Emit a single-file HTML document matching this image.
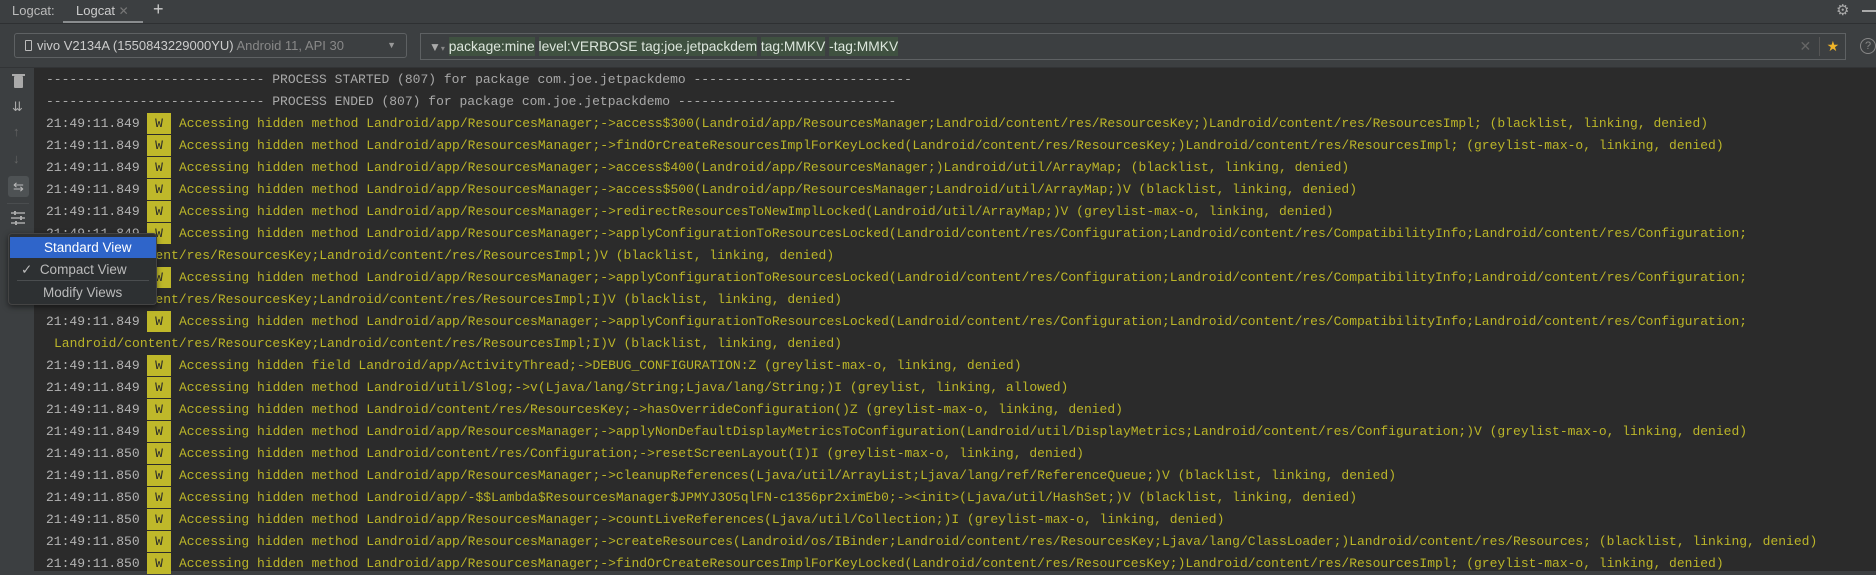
<!DOCTYPE html>
<html><head><meta charset="utf-8"><style>
*{margin:0;padding:0;box-sizing:border-box}
body{width:1876px;height:571px;overflow:hidden;background:#3c3f41;position:relative;font-family:"Liberation Sans",sans-serif;color:#bbb}
.a{position:absolute}
.log{position:absolute;left:34px;top:68px;right:0;bottom:0;background:#2b2b2b}
.r{position:absolute;left:0;height:22px;white-space:pre;font-family:"Liberation Mono",monospace;font-size:13px;line-height:22px}
.t{position:absolute;left:12px;color:#b4b4b4}
.w{position:absolute;left:113px;width:24px;height:21px;background:#bfb82a;color:#2b2b2b;text-align:center}
.m{position:absolute;left:145px;color:#bbb529}
.c{position:absolute;left:20px;color:#bbb529}
.p{position:absolute;left:12px;color:#a9a9a9}
.chip{background:#3f5140;color:#dde6dd;padding:2px 0}
</style></head><body>
<div class="a" style="left:12px;top:3px;font-size:13px;color:#bbb">Logcat:</div>
<div class="a" style="left:76px;top:3px;font-size:13px;color:#ccc">Logcat <span style="color:#777;font-size:12px">✕</span></div>
<div class="a" style="left:63px;top:21px;width:80px;height:3px;background:#8a8d8f"></div>
<div class="a" style="left:153px;top:-1px;font-size:18px;color:#ccc">+</div>
<div class="a" style="left:0;top:23px;width:1876px;height:1px;background:#2e3032"></div>
<div class="a" style="left:1836px;top:1px;font-size:15px;color:#aaa">⚙</div>
<div class="a" style="left:1862px;top:10px;width:14px;height:1.5px;background:#aaa"></div>
<div class="a" style="left:14px;top:33px;width:393px;height:25px;border:1px solid #5e6163;border-radius:3px;background:#3c3f41;font-size:13px;line-height:23px;padding-left:10px">
<span style="display:inline-block;width:7px;height:11px;border:1.5px solid #bbb;border-radius:1px;vertical-align:-1px;margin-right:5px"></span><span style="color:#ccc">vivo V2134A (1550843229000YU)</span> <span style="color:#888">Android 11, API 30</span><span style="position:absolute;right:10px;color:#999;font-size:9px">▼</span></div>
<div class="a" style="left:420px;top:33px;width:1426px;height:27px;border:1px solid #5e6163;background:#3c3f41;font-size:13.8px;line-height:25px;padding-left:8px">
<span style="color:#aaa;font-size:12px">▼</span><span style="color:#888;font-size:8px">▾</span> <span class="chip">package:mine</span> <span class="chip">level:VERBOSE </span> <span class="chip">tag:joe.jetpackdem</span> <span class="chip">tag:MMKV</span> <span class="chip">-tag:MMKV</span>
<span style="position:absolute;right:34px;color:#666">✕</span><span style="position:absolute;right:25px;top:3px;width:1px;height:19px;background:#555"></span><span style="position:absolute;right:6px;color:#f0b429">★</span></div>
<div class="a" style="left:1860px;top:38px;width:16px;height:16px;border:1px solid #888;border-radius:50%;font-size:11px;color:#888;line-height:14px;padding-left:4px">?</div>
<div class="a" style="left:0;top:67px;width:1876px;height:1px;background:#323436"></div>
<div class="a" style="left:14px;top:76px;width:9px;height:12px;background:#aaa;border-radius:1px"></div>
<div class="a" style="left:12px;top:74px;width:13px;height:2px;background:#aaa"></div>
<div class="a" style="left:12px;top:99px;font-size:13px;color:#aaa">⇊</div>
<div class="a" style="left:13px;top:124px;font-size:13px;color:#666">↑</div>
<div class="a" style="left:13px;top:151px;font-size:13px;color:#666">↓</div>
<div class="a" style="left:8px;top:176px;width:21px;height:21px;background:#4e5254;border-radius:3px;color:#bbb;font-size:13px;text-align:center;line-height:21px">⇆</div>
<div class="a" style="left:7px;top:203px;width:22px;height:1px;background:#4a4d4f"></div>
<svg class="a" style="left:10px;top:210px" width="16" height="16" viewBox="0 0 16 16" fill="none" stroke="#aaa" stroke-width="1.5"><path d="M1 3h14M1 8h14M1 13h14"/><path d="M5 1v4M11 6v4M6 11v4" stroke-width="2"/></svg>
<div class="log">
<div class="r" style="top:1px"><span class="p">---------------------------- PROCESS STARTED (807) for package com.joe.jetpackdemo ----------------------------</span></div>
<div class="r" style="top:23px"><span class="p">---------------------------- PROCESS ENDED (807) for package com.joe.jetpackdemo ----------------------------</span></div>
<div class="r" style="top:45px"><span class="t">21:49:11.849</span><span class="w">W</span><span class="m">Accessing hidden method Landroid/app/ResourcesManager;-&gt;access$300(Landroid/app/ResourcesManager;Landroid/content/res/ResourcesKey;)Landroid/content/res/ResourcesImpl; (blacklist, linking, denied)</span></div>
<div class="r" style="top:67px"><span class="t">21:49:11.849</span><span class="w">W</span><span class="m">Accessing hidden method Landroid/app/ResourcesManager;-&gt;findOrCreateResourcesImplForKeyLocked(Landroid/content/res/ResourcesKey;)Landroid/content/res/ResourcesImpl; (greylist-max-o, linking, denied)</span></div>
<div class="r" style="top:89px"><span class="t">21:49:11.849</span><span class="w">W</span><span class="m">Accessing hidden method Landroid/app/ResourcesManager;-&gt;access$400(Landroid/app/ResourcesManager;)Landroid/util/ArrayMap; (blacklist, linking, denied)</span></div>
<div class="r" style="top:111px"><span class="t">21:49:11.849</span><span class="w">W</span><span class="m">Accessing hidden method Landroid/app/ResourcesManager;-&gt;access$500(Landroid/app/ResourcesManager;Landroid/util/ArrayMap;)V (blacklist, linking, denied)</span></div>
<div class="r" style="top:133px"><span class="t">21:49:11.849</span><span class="w">W</span><span class="m">Accessing hidden method Landroid/app/ResourcesManager;-&gt;redirectResourcesToNewImplLocked(Landroid/util/ArrayMap;)V (greylist-max-o, linking, denied)</span></div>
<div class="r" style="top:155px"><span class="t">21:49:11.849</span><span class="w">W</span><span class="m">Accessing hidden method Landroid/app/ResourcesManager;-&gt;applyConfigurationToResourcesLocked(Landroid/content/res/Configuration;Landroid/content/res/CompatibilityInfo;Landroid/content/res/Configuration;</span></div>
<div class="r" style="top:177px"><span class="c">Landroid/content/res/ResourcesKey;Landroid/content/res/ResourcesImpl;)V (blacklist, linking, denied)</span></div>
<div class="r" style="top:199px"><span class="t">21:49:11.849</span><span class="w">W</span><span class="m">Accessing hidden method Landroid/app/ResourcesManager;-&gt;applyConfigurationToResourcesLocked(Landroid/content/res/Configuration;Landroid/content/res/CompatibilityInfo;Landroid/content/res/Configuration;</span></div>
<div class="r" style="top:221px"><span class="c">Landroid/content/res/ResourcesKey;Landroid/content/res/ResourcesImpl;I)V (blacklist, linking, denied)</span></div>
<div class="r" style="top:243px"><span class="t">21:49:11.849</span><span class="w">W</span><span class="m">Accessing hidden method Landroid/app/ResourcesManager;-&gt;applyConfigurationToResourcesLocked(Landroid/content/res/Configuration;Landroid/content/res/CompatibilityInfo;Landroid/content/res/Configuration;</span></div>
<div class="r" style="top:265px"><span class="c">Landroid/content/res/ResourcesKey;Landroid/content/res/ResourcesImpl;I)V (blacklist, linking, denied)</span></div>
<div class="r" style="top:287px"><span class="t">21:49:11.849</span><span class="w">W</span><span class="m">Accessing hidden field Landroid/app/ActivityThread;-&gt;DEBUG_CONFIGURATION:Z (greylist-max-o, linking, denied)</span></div>
<div class="r" style="top:309px"><span class="t">21:49:11.849</span><span class="w">W</span><span class="m">Accessing hidden method Landroid/util/Slog;-&gt;v(Ljava/lang/String;Ljava/lang/String;)I (greylist, linking, allowed)</span></div>
<div class="r" style="top:331px"><span class="t">21:49:11.849</span><span class="w">W</span><span class="m">Accessing hidden method Landroid/content/res/ResourcesKey;-&gt;hasOverrideConfiguration()Z (greylist-max-o, linking, denied)</span></div>
<div class="r" style="top:353px"><span class="t">21:49:11.849</span><span class="w">W</span><span class="m">Accessing hidden method Landroid/app/ResourcesManager;-&gt;applyNonDefaultDisplayMetricsToConfiguration(Landroid/util/DisplayMetrics;Landroid/content/res/Configuration;)V (greylist-max-o, linking, denied)</span></div>
<div class="r" style="top:375px"><span class="t">21:49:11.850</span><span class="w">W</span><span class="m">Accessing hidden method Landroid/content/res/Configuration;-&gt;resetScreenLayout(I)I (greylist-max-o, linking, denied)</span></div>
<div class="r" style="top:397px"><span class="t">21:49:11.850</span><span class="w">W</span><span class="m">Accessing hidden method Landroid/app/ResourcesManager;-&gt;cleanupReferences(Ljava/util/ArrayList;Ljava/lang/ref/ReferenceQueue;)V (blacklist, linking, denied)</span></div>
<div class="r" style="top:419px"><span class="t">21:49:11.850</span><span class="w">W</span><span class="m">Accessing hidden method Landroid/app/-$$Lambda$ResourcesManager$JPMYJ3O5qlFN-c1356pr2ximEb0;-&gt;&lt;init&gt;(Ljava/util/HashSet;)V (blacklist, linking, denied)</span></div>
<div class="r" style="top:441px"><span class="t">21:49:11.850</span><span class="w">W</span><span class="m">Accessing hidden method Landroid/app/ResourcesManager;-&gt;countLiveReferences(Ljava/util/Collection;)I (greylist-max-o, linking, denied)</span></div>
<div class="r" style="top:463px"><span class="t">21:49:11.850</span><span class="w">W</span><span class="m">Accessing hidden method Landroid/app/ResourcesManager;-&gt;createResources(Landroid/os/IBinder;Landroid/content/res/ResourcesKey;Ljava/lang/ClassLoader;)Landroid/content/res/Resources; (blacklist, linking, denied)</span></div>
<div class="r" style="top:485px"><span class="t">21:49:11.850</span><span class="w">W</span><span class="m">Accessing hidden method Landroid/app/ResourcesManager;-&gt;findOrCreateResourcesImplForKeyLocked(Landroid/content/res/ResourcesKey;)Landroid/content/res/ResourcesImpl; (greylist-max-o, linking, denied)</span></div>
</div>
<div class="a" style="left:8px;top:233px;width:149px;height:72px;background:#2d3032;border:1px solid #444;border-radius:4px;font-size:13.5px;box-shadow:0 2px 6px rgba(0,0,0,.5)">
<div class="a" style="left:1px;top:3px;width:146px;height:21px;background:#2f65ca;color:#fff;line-height:21px;padding-left:34px">Standard View</div>
<div class="a" style="left:0;top:25px;width:146px;height:21px;color:#bbb;line-height:21px;padding-left:12px">✓&nbsp;&nbsp;Compact View</div>
<div class="a" style="left:8px;top:46px;width:132px;height:1px;background:#4a4d4f"></div>
<div class="a" style="left:34px;top:48px;color:#bbb;line-height:21px">Modify Views</div>
</div>
</body></html>
